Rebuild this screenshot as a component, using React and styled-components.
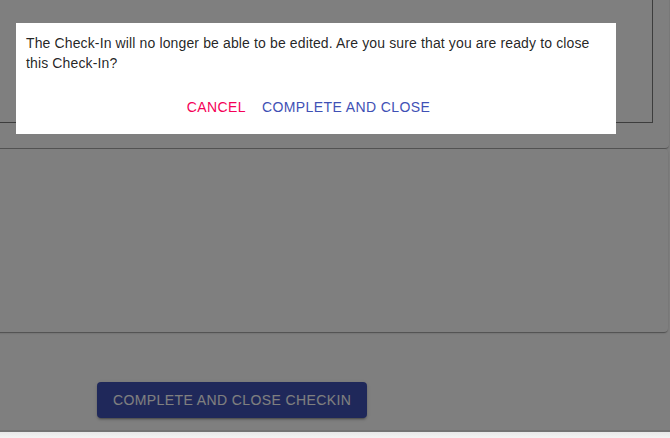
import React from "react";
import styled, { createGlobalStyle } from "styled-components";

const Global = createGlobalStyle`
  html, body { margin: 0; padding: 0; background: #f2f2f2; }
  body { font-family: "Liberation Sans", Arial, sans-serif; }
`;

const Page = styled.div`
  position: relative;
  width: 670px;
  height: 438px;
  overflow: hidden;
  display: flex;
  flex-direction: column;
`;

const Sheet = styled.main`
  height: 430px;
  flex: none;
  background: #fff;
  box-shadow: 0 1px 2px rgba(0, 0, 0, 0.35), 0 2px 3px rgba(0, 0, 0, 0.15);
  display: flex;
  flex-direction: column;
`;

const Card = styled.section`
  flex: none;
  box-sizing: border-box;
  margin-left: -20px;
  width: ${(p) => p.$width}px;
  height: ${(p) => p.$height}px;
  margin-top: ${(p) => p.$top || 0}px;
  background: #fff;
  border-radius: 4px;
  box-shadow: 0 2px 1px -1px rgba(0, 0, 0, 0.2), 0 1px 1px 0 rgba(0, 0, 0, 0.14),
    0 1px 3px 0 rgba(0, 0, 0, 0.12);
  padding: ${(p) => p.$pad || "0"};
  display: flex;
`;

const Field = styled.div`
  flex: 1;
  margin-top: -2px;
  border: 1px solid rgba(0, 0, 0, 0.52);
`;

const ActionRow = styled.div`
  padding: 50px 0 0 97px;
  display: flex;
`;

const PrimaryButton = styled.button`
  height: 36px;
  padding: 0 16px;
  border: none;
  border-radius: 4px;
  background: #3f51b5;
  color: #fff;
  font-family: "Liberation Sans", Arial, sans-serif;
  font-size: 14px;
  letter-spacing: 0.4px;
  text-transform: uppercase;
  box-shadow: 0 3px 1px -2px rgba(0, 0, 0, 0.2), 0 2px 2px 0 rgba(0, 0, 0, 0.14),
    0 1px 5px 0 rgba(0, 0, 0, 0.12);
  cursor: pointer;
`;

const Strip = styled.div`
  flex: 1;
  background: linear-gradient(#e4e4e4, #f3f3f3);
`;

const Backdrop = styled.div`
  position: absolute;
  left: 0;
  top: 0;
  width: 100%;
  height: 432px;
  background: rgba(0, 0, 0, 0.5);
`;

const Dialog = styled.div`
  position: absolute;
  left: 16px;
  top: 23px;
  width: 600px;
  height: 111px;
  box-sizing: border-box;
  background: #fff;
  padding-top: 10px;
  display: flex;
  flex-direction: column;
`;

const Message = styled.p`
  margin: 0;
  padding: 0 20px 0 10px;
  font-size: 14px;
  line-height: 20px;
  letter-spacing: 0.13px;
  color: rgba(0, 0, 0, 0.87);
`;

const DialogActions = styled.div`
  margin-top: 16px;
  padding-right: 15px;
  display: flex;
  justify-content: center;
`;

const TextButton = styled.button`
  height: 36px;
  padding: 0 8px;
  border: none;
  background: transparent;
  color: ${(p) => p.$color};
  font-family: "Liberation Sans", Arial, sans-serif;
  font-size: 14px;
  letter-spacing: 0.4px;
  text-transform: uppercase;
  cursor: pointer;
`;

export default function App() {
  return (
    <>
      <Global />
      <Page>
        <Sheet>
          <Card $width={689} $height={158} $top={-10} $pad="0 16px 25px 0">
            <Field />
          </Card>
          <Card $width={688} $height={183} $top={1} />
          <ActionRow>
            <PrimaryButton>Complete and close checkin</PrimaryButton>
          </ActionRow>
        </Sheet>
        <Strip />
        <Backdrop />
        <Dialog role="dialog">
          <Message>
            The Check-In will no longer be able to be edited. Are you sure that
            you are ready to close this Check-In?
          </Message>
          <DialogActions>
            <TextButton $color="#f50057">Cancel</TextButton>
            <TextButton $color="#3f51b5">Complete and close</TextButton>
          </DialogActions>
        </Dialog>
      </Page>
    </>
  );
}
